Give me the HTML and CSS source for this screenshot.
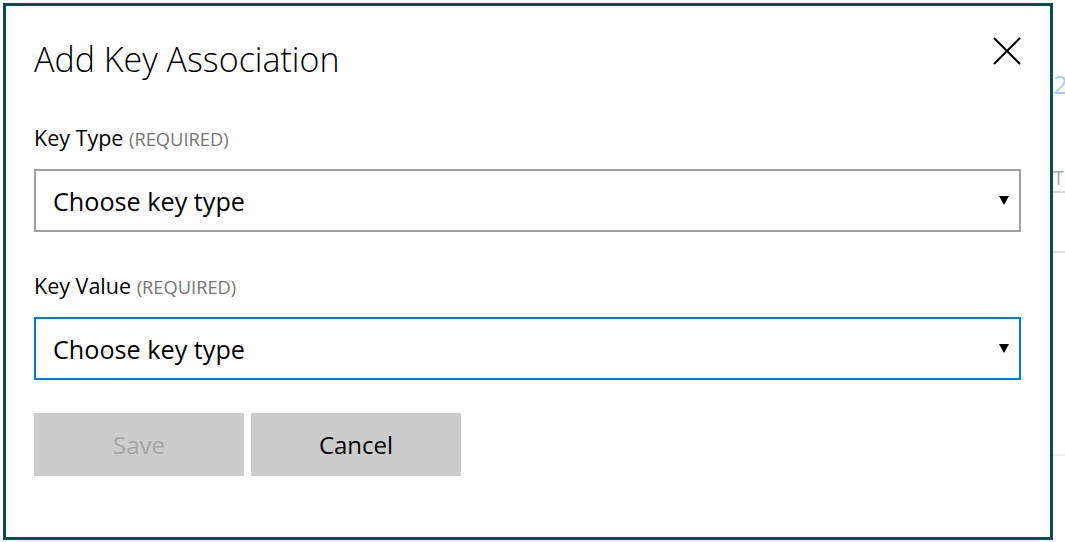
FILE: index.html
```html
<!DOCTYPE html>
<html lang="en">
<head>
<meta charset="utf-8">
<title>Add Key Association</title>
<link rel="stylesheet" href="styles.css">
</head>
<body>
<div class="backdrop" aria-hidden="true">
  <div class="bg-num">2</div>
  <div class="bg-head">Ti</div>
  <div class="bg-rule first"></div>
  <div class="bg-rule second"></div>
  <div class="bg-rule third"></div>
</div>

<div class="modal" role="dialog" aria-labelledby="modal-title">
  <div class="modal-header">
    <h1 id="modal-title" class="modal-title">Add Key Association</h1>
    <button class="close-btn" type="button" aria-label="Close">
      <svg width="28" height="28" viewBox="0 0 28 28" aria-hidden="true">
        <line x1="1" y1="1" x2="27" y2="27" stroke="#000" stroke-width="2.2"/>
        <line x1="27" y1="1" x2="1" y2="27" stroke="#000" stroke-width="2.2"/>
      </svg>
    </button>
  </div>

  <div class="field field-type">
    <label class="field-label">Key Type <span class="req">(REQUIRED)</span></label>
    <div class="select">
      <span class="select-text">Choose key type</span>
      <span class="caret"></span>
    </div>
  </div>

  <div class="field field-value">
    <label class="field-label">Key Value <span class="req">(REQUIRED)</span></label>
    <div class="select focused">
      <span class="select-text">Choose key type</span>
      <span class="caret"></span>
    </div>
  </div>

  <div class="actions">
    <button class="btn disabled" type="button">Save</button>
    <button class="btn" type="button">Cancel</button>
  </div>
</div>
</body>
</html>
```

FILE: styles.css
```css
html, body {
  margin: 0;
  padding: 0;
  background: #ffffff;
  font-family: "Open Sans", "Noto Sans", "Liberation Sans", sans-serif;
}

body {
  position: relative;
  width: 1065px;
  height: 542px;
  overflow: hidden;
}

/* page behind the dialog */
.backdrop {
  height: 542px;
  box-sizing: border-box;
  padding-left: 1053px;
  display: flex;
  flex-direction: column;
  overflow: hidden;
}

.bg-num {
  margin-top: 68px;
  font-size: 26px;
  line-height: 32px;
  color: #a9cbee;
  white-space: nowrap;
}

.bg-head {
  margin-top: 65px;
  font-size: 20px;
  line-height: 26px;
  color: #a8a8a8;
  white-space: nowrap;
}

.bg-rule {
  height: 2px;
  width: 40px;
  background: #dcdcdc;
  flex: none;
}
.bg-rule.first { margin-top: 0; }
.bg-rule.second { margin-top: 58px; }
.bg-rule.third { margin-top: 201px; background: #f0f0f0; }

/* dialog */
.modal {
  position: absolute;
  left: 3px;
  top: 3px;
  width: 1050px;
  height: 537px;
  box-sizing: border-box;
  border: 3px solid #074c4f;
  background: #ffffff;
  padding: 31px 29px 0 28px;
  display: flex;
  flex-direction: column;
}

.modal-header {
  display: flex;
  justify-content: space-between;
  align-items: flex-start;
}

.modal-title {
  margin: 0;
  font-size: 34px;
  line-height: 44px;
  font-weight: 300;
  color: #000;
}

.close-btn {
  margin: 0;
  padding: 0;
  border: 0;
  background: transparent;
  width: 28px;
  height: 28px;
  display: flex;
  cursor: pointer;
}

.field {
  display: flex;
  flex-direction: column;
}
.field-type { margin-top: 45px; }
.field-value { margin-top: 42px; }

.field-label {
  font-size: 21.5px;
  line-height: 24px;
  color: #000;
  margin-bottom: 18px;
}

.req {
  font-size: 18.3px;
  color: #767676;
}

.select {
  height: 63px;
  box-sizing: border-box;
  border: 2px solid #a0a0a0;
  display: flex;
  align-items: center;
  justify-content: space-between;
  padding: 0 10px 0 17px;
}
.select.focused {
  border-color: #0078d4;
}

.select-text {
  font-size: 25.2px;
  line-height: 30px;
  color: #000;
}

.caret {
  width: 0;
  height: 0;
  border-left: 5px solid transparent;
  border-right: 5px solid transparent;
  border-top: 9px solid #000;
}

.actions {
  margin-top: 33px;
  display: flex;
  gap: 7px;
}

.btn {
  width: 210px;
  height: 63px;
  border: 0;
  padding: 0;
  background: #cccccc;
  font-family: inherit;
  font-size: 24px;
  color: #000;
  cursor: pointer;
}
.btn.disabled {
  color: #a6a6a6;
  cursor: default;
}
```
